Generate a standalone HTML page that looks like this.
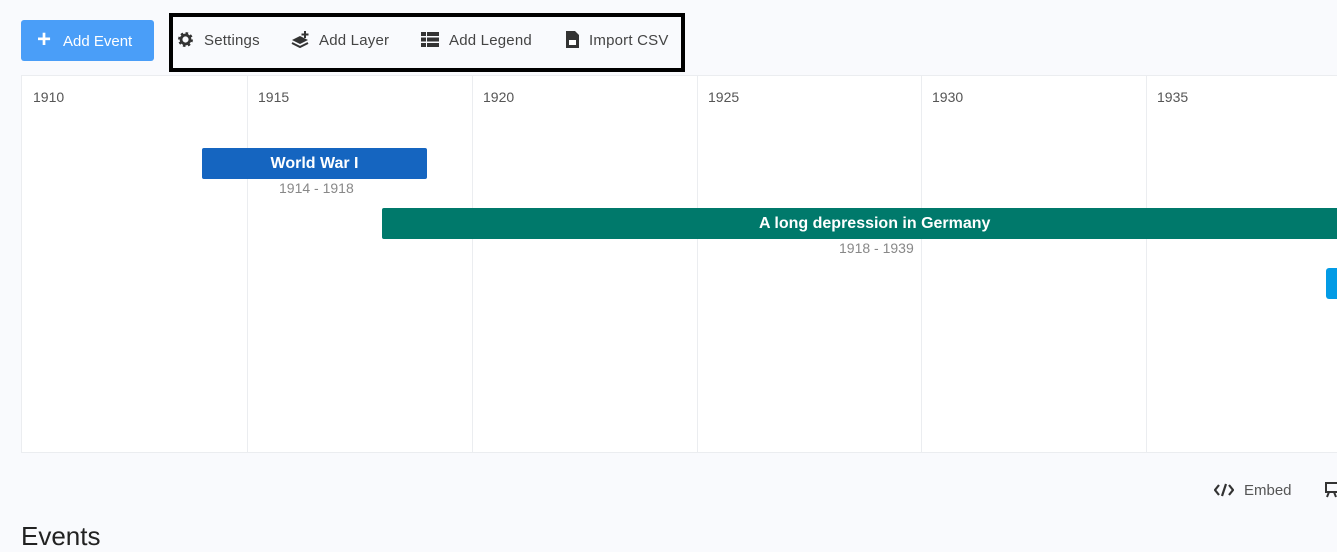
<!DOCTYPE html>
<html><head><style>
body{margin:0;width:1337px;height:552px;overflow:hidden;background:#f9fafd;font-family:"Liberation Sans",sans-serif;position:relative;color:#444}
.a{position:absolute}
.btn{left:21px;top:20px;width:133px;height:41px;background:#4a9ef8;border-radius:3px;color:#fff;font-size:15px;line-height:41px}
.box{left:169px;top:13px;width:508px;height:51px;border:4px solid #000;background:#f9fafd}
.tb{font-size:15px;color:#444;top:32px;letter-spacing:0.2px}
.tl{left:21px;top:75px;width:1330px;height:376px;background:#fff;border:1px solid #ebedf0}
.col{top:0;height:376px;border-left:1px solid #ebedf0}
.yr{font-size:14px;color:#555;top:13px}
.bar{color:#fff;font-weight:bold;font-size:16px;text-align:center;border-radius:2px;height:31px;line-height:31px}
.dt{font-size:14px;color:#888}
</style></head><body>
<div class="a btn"><span style="position:absolute;left:16px;font-size:24px;top:-1px;font-weight:bold">+</span><span style="position:absolute;left:42px;top:1px">Add Event</span></div>
<div class="a box"></div>
<svg class="a" style="left:177px;top:31px" width="17" height="17" viewBox="0 0 16 16"><circle cx="8" cy="8" r="5.5" fill="none" stroke="#333" stroke-width="3" stroke-dasharray="2.2 2.1"/><circle cx="8" cy="8" r="4.2" fill="none" stroke="#333" stroke-width="2.6"/></svg>
<div class="a tb" style="left:204px">Settings</div>
<svg class="a" style="left:291px;top:30px" width="20" height="18" viewBox="0 0 20 18"><path d="M1 10l8 4 8-4-8-4z" fill="#333"/><path d="M1 13l8 4 8-4" fill="none" stroke="#333" stroke-width="2"/><path d="M14 1v7M10.5 4.5h7" stroke="#333" stroke-width="2"/></svg>
<div class="a tb" style="left:319px">Add Layer</div>
<svg class="a" style="left:421px;top:32px" width="18" height="15" viewBox="0 0 18 15"><g fill="#333"><rect x="0" y="0" width="5" height="4"/><rect x="6" y="0" width="12" height="4"/><rect x="0" y="5.5" width="5" height="4"/><rect x="6" y="5.5" width="12" height="4"/><rect x="0" y="11" width="5" height="4"/><rect x="6" y="11" width="12" height="4"/></g></svg>
<div class="a tb" style="left:449px">Add Legend</div>
<svg class="a" style="left:566px;top:31px" width="13" height="17" viewBox="0 0 13 17"><path d="M0 0h9l4 4v13H0z" fill="#333"/><rect x="3" y="9" width="7" height="5" fill="#fff"/></svg>
<div class="a tb" style="left:589px">Import CSV</div>
<div class="a tl">
<div class="a col" style="left:225px"></div><div class="a col" style="left:450px"></div><div class="a col" style="left:675px"></div><div class="a col" style="left:899px"></div><div class="a col" style="left:1124px"></div>
<div class="a yr" style="left:11px">1910</div><div class="a yr" style="left:236px">1915</div><div class="a yr" style="left:461px">1920</div><div class="a yr" style="left:686px">1925</div><div class="a yr" style="left:910px">1930</div><div class="a yr" style="left:1135px">1935</div>
</div>
<div class="a bar" style="left:202px;top:148px;width:225px;background:#1565c0">World War I</div>
<div class="a dt" style="left:279px;top:180px">1914 - 1918</div>
<div class="a bar" style="left:382px;top:208px;width:990px;background:#00796b"><span style="position:absolute;left:377px">A long depression in Germany</span></div>
<div class="a dt" style="left:839px;top:240px">1918 - 1939</div>
<div class="a" style="left:1326px;top:268px;width:20px;height:31px;background:#039be5;border-radius:3px"></div>
<svg class="a" style="left:1214px;top:483px" width="20" height="14" viewBox="0 0 20 14"><path d="M5 2L1 7l4 5M15 2l4 5-4 5M12 1L8 13" fill="none" stroke="#333" stroke-width="2.2"/></svg>
<div class="a" style="left:1244px;top:482px;font-size:15px;color:#555">Embed</div>
<svg class="a" style="left:1325px;top:482px" width="14" height="16"><path d="M1 1h12v9H1zM4 10l-2 5M9 10l2 5" fill="none" stroke="#333" stroke-width="2"/></svg>
<div class="a" style="left:21px;top:521px;font-size:26px;color:#222">Events</div>
</body></html>
